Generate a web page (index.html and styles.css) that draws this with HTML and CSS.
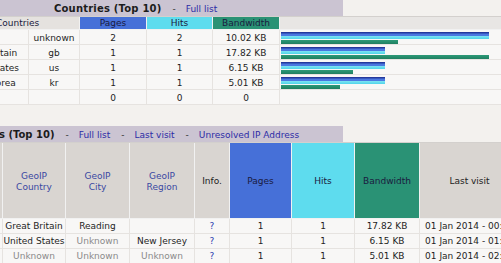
FILE: index.html
```html
<!DOCTYPE html>
<html>
<head>
<meta charset="utf-8">
<link rel="stylesheet" href="styles.css">
</head>
<body>
<section class="box countries">
  <div class="titlerow">
    <div class="title"><b>Countries (Top 10)</b><span class="sep">-</span><a class="lnk">Full list</a></div>
    <div class="blank"></div>
  </div>
  <table class="data">
    <colgroup>
      <col class="w80"><col class="w51"><col class="w67"><col class="w66"><col class="w67"><col class="w360">
    </colgroup>
    <thead>
      <tr class="hrow">
        <th colspan="2" class="hgray hleft">Countries</th>
        <th class="hp">Pages</th>
        <th class="hh">Hits</th>
        <th class="hk">Bandwidth</th>
        <th class="hgray2"></th>
      </tr>
    </thead>
    <tbody>
      <tr>
        <td></td><td>unknown</td><td>2</td><td>2</td><td>10.02 KB</td>
        <td class="barcell"><div class="bar bp" style="width:208px"></div><div class="bar bh" style="width:208px"></div><div class="bar bk" style="width:117px"></div></td>
      </tr>
      <tr>
        <td>Great Britain</td><td>gb</td><td>1</td><td>1</td><td>17.82 KB</td>
        <td class="barcell"><div class="bar bp" style="width:104px"></div><div class="bar bh" style="width:104px"></div><div class="bar bk" style="width:208px"></div></td>
      </tr>
      <tr>
        <td>United States</td><td>us</td><td>1</td><td>1</td><td>6.15 KB</td>
        <td class="barcell"><div class="bar bp" style="width:104px"></div><div class="bar bh" style="width:104px"></div><div class="bar bk" style="width:72px"></div></td>
      </tr>
      <tr>
        <td>South Korea</td><td>kr</td><td>1</td><td>1</td><td>5.01 KB</td>
        <td class="barcell"><div class="bar bp" style="width:104px"></div><div class="bar bh" style="width:104px"></div><div class="bar bk" style="width:59px"></div></td>
      </tr>
      <tr>
        <td></td><td></td><td>0</td><td>0</td><td>0</td><td class="barcell"></td>
      </tr>
    </tbody>
  </table>
</section>

<section class="box hosts">
  <div class="titlerow">
    <div class="title"><b>Hosts (Top 10)</b><span class="sep">-</span><a class="lnk">Full list</a><span class="sep">-</span><a class="lnk">Last visit</a><span class="sep">-</span><a class="lnk">Unresolved IP Address</a></div>
    <div class="blank"></div>
  </div>
  <table class="data">
    <colgroup>
      <col class="w100"><col class="w63"><col class="w64"><col class="w65"><col class="w35"><col class="w62"><col class="w63"><col class="w65"><col class="w100">
    </colgroup>
    <thead>
      <tr class="hrow tall">
        <th class="hgray3">Hosts</th>
        <th class="hgray3 geo">GeoIP<br>Country</th>
        <th class="hgray3 geo">GeoIP<br>City</th>
        <th class="hgray3 geo">GeoIP<br>Region</th>
        <th class="hgray3">Info.</th>
        <th class="hp">Pages</th>
        <th class="hh">Hits</th>
        <th class="hk">Bandwidth</th>
        <th class="hgray3">Last visit</th>
      </tr>
    </thead>
    <tbody>
      <tr>
        <td></td><td>Great Britain</td><td>Reading</td><td></td><td class="q">?</td><td>1</td><td>1</td><td>17.82 KB</td><td class="date">01 Jan 2014 - 00:14</td>
      </tr>
      <tr>
        <td></td><td>United States</td><td class="unk">Unknown</td><td>New Jersey</td><td class="q">?</td><td>1</td><td>1</td><td>6.15 KB</td><td class="date">01 Jan 2014 - 01:22</td>
      </tr>
      <tr>
        <td></td><td class="unk">Unknown</td><td class="unk">Unknown</td><td class="unk">Unknown</td><td class="q">?</td><td>1</td><td>1</td><td>5.01 KB</td><td class="date">01 Jan 2014 - 02:07</td>
      </tr>
    </tbody>
  </table>
</section>
</body>
</html>
```

FILE: styles.css
```css
html, body {
  margin: 0;
  padding: 0;
}
body {
  width: 501px;
  height: 263px;
  overflow: hidden;
  background: #f3f1ee;
  font-family: "DejaVu Sans", Verdana, sans-serif;
  font-size: 9px;
  color: #1e1e1e;
}

.box {
  display: block;
}
.countries {
  margin-left: -51px;
  width: 691px;
}
.hosts {
  margin-left: -97px;
  width: 617px;
  margin-top: 21px;
}

.titlerow {
  display: flex;
  height: 16px;
  border-bottom: 1px solid #d3d0cd;
}
.title {
  background: #cbc4d2;
  display: flex;
  align-items: center;
  white-space: nowrap;
  box-sizing: border-box;
  padding-top: 1px;
  flex: none;
}
.countries .title {
  width: 394px;
  padding-left: 105px;
}
.hosts .title {
  width: 440px;
  padding-left: 70px;
}
.title b {
  font-size: 10px;
  font-weight: bold;
  color: #1c1c1c;
}
.countries .title b {
  letter-spacing: 0.2px;
}
.sep {
  margin: 0 10px 0 11px;
  color: #333;
}
.lnk {
  color: #2c2ca6;
  text-decoration: none;
}
.blank {
  flex: 1;
}

.data {
  border-collapse: separate;
  border-spacing: 0;
  table-layout: fixed;
}
.countries .data { width: 691px; }
.hosts .data { width: 617px; }

.w35 { width: 35px; }
.w51 { width: 51px; }
.w62 { width: 62px; }
.w63 { width: 63px; }
.w64 { width: 64px; }
.w65 { width: 65px; }
.w66 { width: 66px; }
.w67 { width: 67px; }
.w80 { width: 80px; }
.w100 { width: 100px; }
.w360 { width: 360px; }

.data th,
.data td {
  box-sizing: border-box;
  padding: 0;
  font-weight: normal;
  text-align: center;
  white-space: nowrap;
  overflow: hidden;
}

.hrow th {
  height: 13px;
  line-height: 12px;
  border-right: 1px solid #f1f1f1;
  border-bottom: 1px solid #f1f1f1;
  color: #1a1a40;
}
.hrow.tall th {
  height: 76px;
  line-height: 11px;
  padding-top: 2px;
  vertical-align: middle;
}
.hgray { background: #e5e2df; }
.hgray2 { background: #e8e6e4; }
.hgray3 { background: #d9d5d1; color: #222 !important; }
.hleft { text-align: left !important; padding-left: 47px !important; }
.hp { background: #4670d8; }
.hh { background: #5edcee; }
.hk { background: #2a9275; }
.geo { color: #3a48a2 !important; }

.data td {
  height: 15px;
  line-height: 14px;
  background: #f8f7f6;
  border-right: 1px solid #e6e3e0;
  border-bottom: 1px solid #e6e3e0;
}
.countries .data td {
  padding-top: 2px;
  line-height: 12px;
}
.countries .data td.barcell,
.data td.barcell {
  text-align: left;
  vertical-align: top;
  padding: 2px 0 0 1px;
  line-height: 0;
}
.bar {
  display: block;
}
.bp {
  height: 4px;
  background: linear-gradient(#23389c 0, #23389c 1px, #4a78e0 2px, #4a78e0 4px);
}
.bh {
  height: 3px;
  background: linear-gradient(#7fe4f2, #4fd4ea);
}
.bk {
  height: 4px;
  margin-top: 1px;
  background: linear-gradient(#2d9a78, #1f7f60);
}

.q { color: #2c3cb0; }
.unk { color: #8a8a8a; }
.data td.date {
  text-align: center;
  overflow: visible;
}
```
